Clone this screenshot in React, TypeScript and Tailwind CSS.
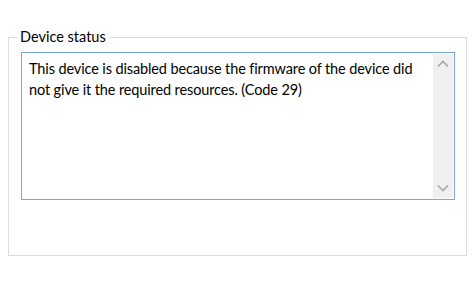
import React from "react";

export default function App() {
  return (
    <div className="w-[474px] h-[287px] bg-white overflow-hidden" style={{ fontFamily: 'Lato, "Noto Sans", sans-serif' }}>
      <fieldset className="ml-[8px] mt-[28px] w-[459px] h-[228px] border border-[#dcdcdc] pl-0 pr-0 pt-[6px] m-0">
        <legend className="ml-[8px] px-[3px] text-[14.5px] leading-[18px] text-black">Device status</legend>
        <div className="ml-[12px] flex w-[434px] h-[148px] border border-[#7aa7dc]">
          <div className="flex-1 pl-[7px] pt-[5px] text-[14.5px] leading-[21px] tracking-[-0.12px] text-black whitespace-nowrap">
            This device is disabled because the firmware of the device did
            <br />
            not give it the required resources. (Code 29)
          </div>
          <div className="w-[20px] my-[1px] mr-[1px] bg-[#f0f0f0] flex flex-col justify-between items-center py-[6px]">
            <svg width="12" height="8" viewBox="0 0 12 8"><path d="M1 6.5 L6 1.5 L11 6.5" fill="none" stroke="#a6a6a6" strokeWidth="1.6" /></svg>
            <svg width="12" height="8" viewBox="0 0 12 8"><path d="M1 1.5 L6 6.5 L11 1.5" fill="none" stroke="#a6a6a6" strokeWidth="1.6" /></svg>
          </div>
        </div>
      </fieldset>
    </div>
  );
}
